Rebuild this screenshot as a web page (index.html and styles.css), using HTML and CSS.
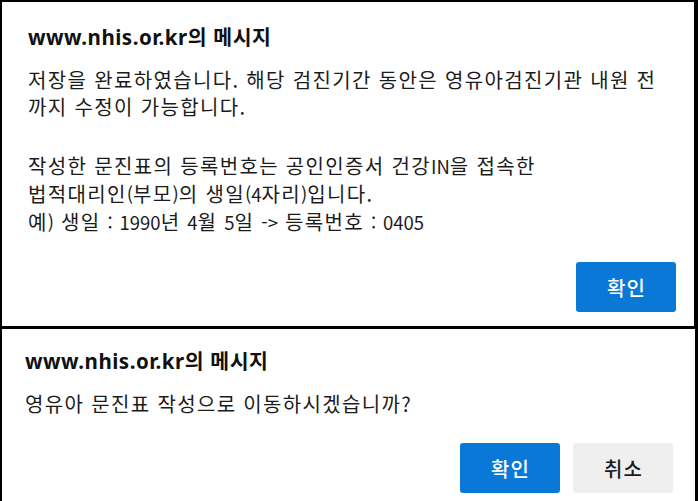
FILE: index.html
```html
<!DOCTYPE html>
<html lang="ko">
<head>
<meta charset="utf-8">
<title>www.nhis.or.kr의 메시지</title>
<link rel="stylesheet" href="styles.css">
</head>
<body>
<main class="stack">
  <section class="dialog dialog-first">
    <h2 class="dialog-title">www.nhis.or.kr<span class="title-ko">의 메시지</span></h2>
    <div class="dialog-message">
      <p class="msg-para">저장을 완료하였습니다. 해당 검진기간 동안은 영유아검진기관 내원 전<br>까지 수정이 가능합니다.</p>
      <p class="msg-para msg-para-gap">작성한 문진표의 등록번호는 공인인증서 건강<span class="lat">IN</span>을 접속한<br>법적대리인<span class="lat">(</span>부모<span class="lat">)</span>의 생일<span class="lat">(4</span>자리<span class="lat">)</span>입니다.<br>예<span class="lat">)</span> 생일 <span class="lat">:</span> <span class="lat">1990</span>년 <span class="lat">4</span>월 <span class="lat">5</span>일 <span class="lat">-&gt;</span> 등록번호 <span class="lat">:</span> <span class="lat">0405</span></p>
    </div>
    <div class="dialog-actions">
      <button class="btn btn-primary" type="button">확인</button>
    </div>
  </section>
  <section class="dialog dialog-second">
    <h2 class="dialog-title">www.nhis.or.kr<span class="title-ko">의 메시지</span></h2>
    <div class="dialog-message">
      <p class="msg-para">영유아 문진표 작성으로 이동하시겠습니까?</p>
    </div>
    <div class="dialog-actions">
      <button class="btn btn-primary" type="button">확인</button>
      <button class="btn btn-secondary" type="button">취소</button>
    </div>
  </section>
</main>
</body>
</html>
```
FILE: styles.css
```css
* {
  box-sizing: border-box;
}

html, body {
  margin: 0;
  padding: 0;
  background: #ffffff;
}

body {
  width: 698px;
  height: 501px;
  overflow: hidden;
  font-family: "Noto Sans CJK KR", "Noto Sans", sans-serif;
  color: #1b1b1b;
}

.stack {
  display: flex;
  flex-direction: column;
  width: 698px;
}

.dialog {
  display: flex;
  flex-direction: column;
  background: #ffffff;
  border-style: solid;
  border-color: #000000;
}

.dialog-first {
  border-width: 2px 4px 3px 2px;
  padding: 22px 18px 14px 26px;
}

.dialog-second {
  border-width: 0 3px 3px 2px;
  padding: 19px 22px 10px 23px;
}

.dialog-title {
  margin: 0;
  font-family: "Noto Sans", "Noto Sans CJK KR", sans-serif;
  font-size: 20.5px;
  line-height: 24px;
  font-weight: 700;
  letter-spacing: 0.5px;
  color: #111111;
}

.title-ko {
  font-family: "Noto Sans CJK KR", sans-serif;
  font-weight: 700;
}

.dialog-message {
  margin-top: 17px;
}

.msg-para {
  margin: 0;
  font-size: 20px;
  line-height: 27px;
  letter-spacing: 1.35px;
  white-space: nowrap;
}

.msg-para-gap {
  margin-top: 32px;
}

.lat {
  font-size: 18.5px;
  letter-spacing: 0;
}

.dialog-actions {
  display: flex;
  justify-content: flex-end;
  gap: 13px;
  margin-top: 26px;
}

.btn {
  width: 100px;
  height: 50px;
  border: none;
  border-radius: 3px;
  font-family: "Noto Sans CJK KR", sans-serif;
  font-size: 20px;
  font-weight: 500;
  letter-spacing: 1px;
  text-indent: 1px;
  padding: 0;
  display: flex;
  align-items: center;
  justify-content: center;
}

.btn-primary {
  background: #0a78d6;
  color: #ffffff;
}

.btn-secondary {
  background: #efefef;
  color: #1b1b1b;
}
```
